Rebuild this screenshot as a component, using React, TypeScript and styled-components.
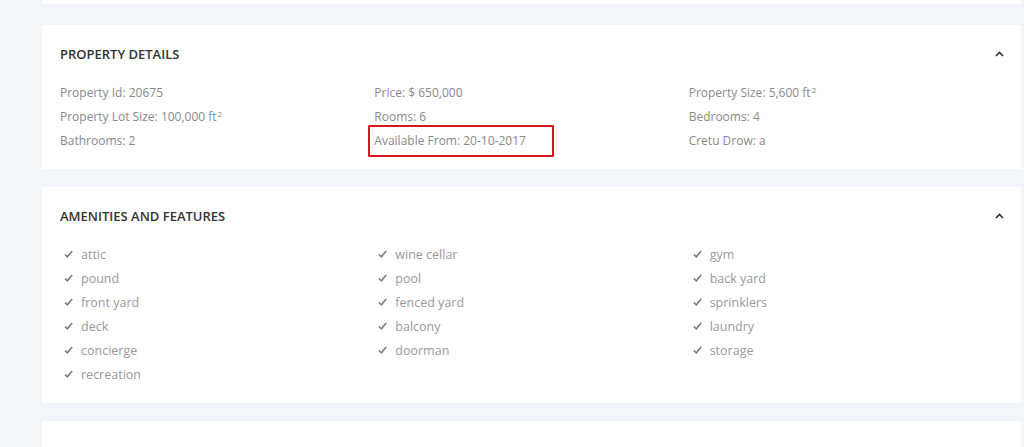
import React from "react"
import styled, { createGlobalStyle } from "styled-components"

const GlobalStyle = createGlobalStyle`
  html, body {
    margin: 0;
    padding: 0;
    background: #f2f6fa;
    overflow: hidden;
  }
  body {
    font-family: "Open Sans", "Liberation Sans", sans-serif;
  }
`

const details = [
  { label: "Property Id", value: "20675" },
  { label: "Price", value: "$ 650,000" },
  { label: "Property Size", value: "5,600 ft", sup: "2" },
  { label: "Property Lot Size", value: "100,000 ft", sup: "2" },
  { label: "Rooms", value: "6" },
  { label: "Bedrooms", value: "4" },
  { label: "Bathrooms", value: "2" },
  { label: "Available From", value: "20-10-2017", marked: true },
  { label: "Cretu Drow", value: "a" },
]

const amenities = [
  "attic", "wine cellar", "gym",
  "pound", "pool", "back yard",
  "front yard", "fenced yard", "sprinklers",
  "deck", "balcony", "laundry",
  "concierge", "doorman", "storage",
  "recreation",
]

const Page = styled.div`
  display: flex;
  flex-direction: column;
  gap: 18px;
  padding: 0 3px 0 42px;
`

const Card = styled.section`
  background: #ffffff;
  padding: 19px 18px 17px;
`

const CardTail = styled(Card)`
  height: 4px;
  padding: 0;
  margin-bottom: 3px;
`

const CardStub = styled(Card)`
  height: 60px;
  padding: 0;
`

const Header = styled.div`
  display: flex;
  align-items: center;
  justify-content: space-between;
  height: 20px;
  margin-bottom: 16px;
`

const Title = styled.h2`
  margin: 0;
  font-size: 13px;
  font-weight: 600;
  color: #333333;
  letter-spacing: 0;
`

const Toggle = styled.button`
  display: flex;
  align-items: center;
  justify-content: center;
  padding: 0;
  margin-right: -1px;
  border: 0;
  background: none;
  width: 10px;
  height: 10px;
  cursor: pointer;
`

const Grid = styled.div`
  display: grid;
  grid-template-columns: repeat(3, 1fr);
  grid-auto-rows: 24px;
`

const Item = styled.div`
  position: relative;
  display: flex;
  align-items: center;
  font-size: 12px;
  color: #8a8a8a;
  white-space: nowrap;

  sup {
    font-size: 8px;
    line-height: 0;
    position: relative;
    top: -2px;
    margin-left: 1px;
  }
`

const Marker = styled.span`
  position: absolute;
  left: -6px;
  top: -3px;
  width: 186px;
  height: 32px;
  box-sizing: border-box;
  border: 2px solid #d4161f;
  border-radius: 1px;
  pointer-events: none;
`

const Feature = styled(Item)`
  padding-left: 4px;
  gap: 8px;
  font-size: 12.5px;
  color: #9a9a9a;
`

const Chevron = () => (
  <svg width="9" height="6" viewBox="0 0 9 6">
    <polyline points="1,5 4.5,1.5 8,5" fill="none" stroke="#333" strokeWidth="1.7" />
  </svg>
)

const Check = () => (
  <svg width="9" height="8" viewBox="0 0 9 8">
    <path d="M1 4.4 L3.3 6.8 L8.2 1" fill="none" stroke="#7a7a7a" strokeWidth="1.5" />
  </svg>
)

const App = () => (
  <>
    <GlobalStyle />
    <Page>
      <CardTail />
      <Card>
        <Header>
          <Title>PROPERTY DETAILS</Title>
          <Toggle aria-label="collapse"><Chevron /></Toggle>
        </Header>
        <Grid>
          {details.map((d) => (
            <Item key={d.label}>
              {d.label}: {d.value}
              {d.sup && <sup>{d.sup}</sup>}
              {d.marked && <Marker />}
            </Item>
          ))}
        </Grid>
      </Card>
      <Card>
        <Header>
          <Title>AMENITIES AND FEATURES</Title>
          <Toggle aria-label="collapse"><Chevron /></Toggle>
        </Header>
        <Grid>
          {amenities.map((a) => (
            <Feature key={a}>
              <Check />
              {a}
            </Feature>
          ))}
        </Grid>
      </Card>
      <CardStub />
    </Page>
  </>
)

export default App
